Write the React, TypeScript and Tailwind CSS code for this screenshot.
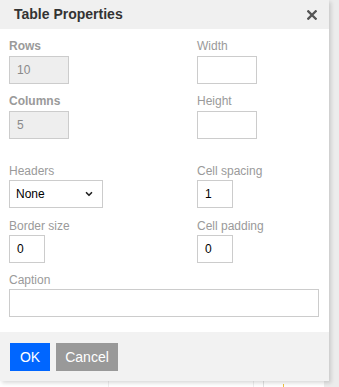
import { ChevronDown } from "lucide-react"

function Label({ text, bold }: { text: string; bold?: boolean }) {
  return (
    <div className={`h-[14px] leading-[14px] text-[12px] text-[#9a9a9a] ${bold ? "font-bold" : ""}`}>{text}</div>
  )
}

function Box({ value, w, disabled }: { value?: string; w: string; disabled?: boolean }) {
  return (
    <div
      className={`${w} h-[28px] border border-[#cccccc] flex items-center pl-[7px] text-[12px] ${
        disabled ? "bg-[#eeeeee] text-[#8a8a8a]" : "bg-white text-black"
      }`}
    >
      {value}
    </div>
  )
}

export default function App() {
  return (
    <div
      className="relative w-[339px] h-[387px] bg-white overflow-hidden"
      style={{ fontFamily: '"Liberation Sans", Arial, sans-serif' }}
    >
      {/* page behind the dialog */}
      <div className="absolute left-[324px] top-0 w-[15px] h-full bg-[#ececec]" />
      <div className="absolute left-[108px] top-[370px] w-px h-[17px] bg-[#eeeeee]" />
      <div className="absolute left-[253px] top-[370px] w-px h-[17px] bg-[#eeeeee]" />
      <div className="absolute left-[263px] top-[370px] w-px h-[17px] bg-[#e2e2e2]" />
      <div className="absolute left-[283px] top-[384px] w-px h-[3px] bg-[#f0c040]" />

      <div className="relative w-[329px] bg-white shadow-[2px_2px_4px_rgba(0,0,0,0.15)]">
        <div className="h-[29px] bg-[#f0f0f0] flex items-center justify-between pl-[14px] pr-[12px]">
          <span className="text-[14px] font-bold text-[#333333]">Table Properties</span>
          <svg width="10" height="10" viewBox="0 0 10 10" className="mt-[1px]">
            <path d="M1.3 1.3 L8.7 8.7 M8.7 1.3 L1.3 8.7" stroke="#555555" strokeWidth="2.3" strokeLinecap="square" />
          </svg>
        </div>

        <div className="pl-[9px] pr-[10px] pt-[10px] pb-[15px]">
          <div className="grid grid-cols-[188px_1fr]">
            <div>
              <Label text="Rows" bold />
              <div className="mt-[3px]"><Box w="w-[60px]" value="10" disabled /></div>
            </div>
            <div>
              <Label text="Width" />
              <div className="mt-[3px]"><Box w="w-[60px]" /></div>
            </div>

            <div className="mt-[10px]">
              <Label text="Columns" bold />
              <div className="mt-[3px]"><Box w="w-[60px]" value="5" disabled /></div>
            </div>
            <div className="mt-[10px]">
              <Label text="Height" />
              <div className="mt-[3px]"><Box w="w-[60px]" /></div>
            </div>

            <div className="mt-[25px]">
              <Label text="Headers" />
              <div className="mt-[2px] w-[94px] h-[28px] border border-[#cccccc] flex items-center justify-between pl-[6px] pr-[8px] text-[12px] text-black">
                <span>None</span>
                <ChevronDown size={10} strokeWidth={4} color="#222222" />
              </div>
            </div>
            <div className="mt-[25px]">
              <Label text="Cell spacing" />
              <div className="mt-[2px]"><Box w="w-[36px]" value="1" /></div>
            </div>

            <div className="mt-[11px]">
              <Label text="Border size" />
              <div className="mt-[2px]"><Box w="w-[36px]" value="0" /></div>
            </div>
            <div className="mt-[11px]">
              <Label text="Cell padding" />
              <div className="mt-[2px]"><Box w="w-[36px]" value="0" /></div>
            </div>
          </div>

          <div className="mt-[10px]">
            <Label text="Caption" />
            <div className="mt-[2px]"><Box w="w-[310px]" /></div>
          </div>
        </div>

        <div className="h-[49px] bg-[#f2f2f2] flex items-start gap-[6px] pl-[10px] pt-[11px]">
          <button className="h-[28px] w-[40px] bg-[#0066ff] text-white text-[14px]">OK</button>
          <button className="h-[28px] w-[62px] bg-[#999999] text-white text-[14px]">Cancel</button>
        </div>
      </div>
    </div>
  )
}
